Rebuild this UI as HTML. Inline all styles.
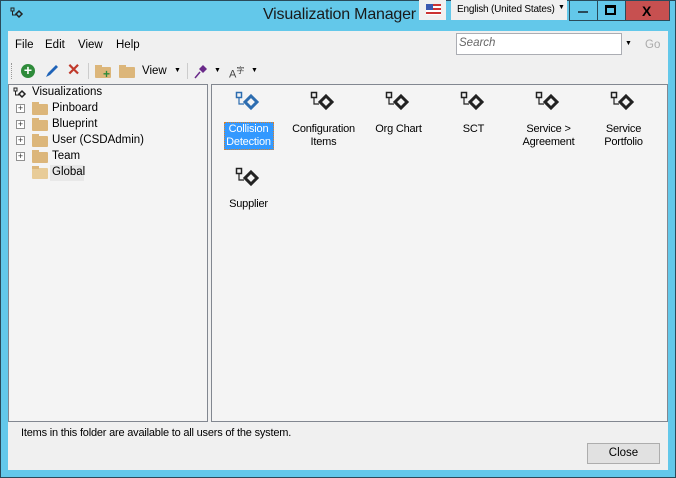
<!DOCTYPE html>
<html><head><style>
*{margin:0;padding:0;box-sizing:border-box}
body{width:676px;height:478px;overflow:hidden;font-family:"Liberation Sans",sans-serif;font-size:11.5px;color:#000;background:#63c8ea;position:relative}
.a{position:absolute}
.frame{left:0;top:0;width:676px;height:478px;border:1px solid #2a4a5a}
.client{left:8px;top:31px;width:660px;height:439px;background:#f0f0f0}
.pane{background:#f4f4f4;border:1px solid #828790}
.t{position:absolute;white-space:nowrap}
.lbl{position:absolute;width:75px;text-align:center;line-height:13px;font-size:11px;letter-spacing:-0.2px}
.pl{position:absolute;width:9px;height:9px;border:1px solid #919191;background:#fff;font-size:9px;line-height:7px;text-align:center;color:#333}
.fd{position:absolute;width:16px;height:11px;background:#dcb67a;border-radius:1px}
.fd:before{content:"";position:absolute;left:0;top:-2px;width:7px;height:3px;background:#dcb67a}
</style></head><body>
<div class="a frame"></div>
<svg class="a" style="left:10px;top:7px" width="14" height="12"><rect x="1" y="1" width="3" height="3" fill="none" stroke="#222"/><path d="M2.5 4V8H6" stroke="#222" fill="none"/><path d="M9 4L12 7 9 10 6 7Z" fill="none" stroke="#222" stroke-width="1.5"/></svg>
<div class="t" style="left:263px;top:6px;font-size:16px;color:#1a1a1a;letter-spacing:-0.2px">Visualization Manager</div>
<div class="a" style="left:419px;top:0;width:27px;height:20px;background:#f0f0f0"></div>
<div class="a" style="left:426px;top:4px;width:15px;height:11px;background:repeating-linear-gradient(#c33 0 2px,#fff 2px 4px)"><div style="width:7px;height:6px;background:#3a5ab0"></div></div>
<div class="a" style="left:451px;top:0;width:116px;height:20px;background:#f0f0f0"></div>
<div class="t" style="left:457px;top:4px;font-size:10px;letter-spacing:-0.2px">English (United States)</div>
<div class="t" style="left:558px;top:4px;font-size:7px">▼</div>
<div class="a" style="left:569px;top:0;width:101px;height:21px;border:1px solid #2a4a5a;background:#63c8ea"></div>
<div class="a" style="left:597px;top:0;width:1px;height:21px;background:#2a4a5a"></div>
<div class="a" style="left:625px;top:0;width:45px;height:21px;background:#c75050;border:1px solid #2a4a5a"></div>
<div class="a" style="left:578px;top:11px;width:10px;height:2px;background:#2a4a5a"></div>
<div class="a" style="left:605px;top:5px;width:11px;height:10px;border:2px solid #000;border-top-width:3px"></div>
<div class="t" style="left:642px;top:3px;font-size:14px;font-weight:bold">X</div>
<div class="a client"></div>
<div class="t" style="left:15px;top:39px">File</div>
<div class="t" style="left:45px;top:39px">Edit</div>
<div class="t" style="left:78px;top:39px">View</div>
<div class="t" style="left:116px;top:39px">Help</div>
<div class="a" style="left:456px;top:33px;width:166px;height:22px;background:#fff;border:1px solid #abadb3"></div>
<div class="t" style="left:459px;top:37px;font-style:italic;color:#666">Search</div>
<div class="t" style="left:625px;top:40px;font-size:7px">▼</div>
<div class="t" style="left:645px;top:39px;color:#aaa">Go</div>
<div class="a" style="left:11px;top:63px;width:1px;height:16px;border-left:1px dotted #999"></div>
<div class="a" style="left:21px;top:64px;width:14px;height:14px;border-radius:50%;background:#2e8b3a;color:#fff;font-weight:bold;font-size:14px;line-height:13px;text-align:center">+</div>
<svg class="a" style="left:44px;top:63px" width="16" height="16"><path d="M2 14L4 10 12 2 14 4 6 12Z" fill="#1e63b8"/></svg>
<div class="t" style="left:67px;top:60px;font-size:16px;color:#c0392b;font-weight:bold">✕</div>
<div class="a" style="left:88px;top:63px;width:1px;height:16px;background:#ccc"></div>
<div class="fd" style="left:95px;top:67px"></div><div class="t" style="left:103px;top:67px;color:#2e8b3a;font-weight:bold;font-size:12px">+</div>
<div class="fd" style="left:119px;top:67px"></div>
<div class="t" style="left:142px;top:65px">View</div>
<div class="t" style="left:174px;top:67px;font-size:7px">▼</div>
<div class="a" style="left:187px;top:63px;width:1px;height:16px;background:#ccc"></div>
<svg class="a" style="left:193px;top:63px" width="16" height="16"><path d="M2 15L7 9" stroke="#6a2a8a" stroke-width="1.5"/><path d="M6 6L10 2 14 6 10 10Z" fill="#6a2a8a"/></svg>
<div class="t" style="left:214px;top:67px;font-size:7px">▼</div>
<div class="t" style="left:229px;top:65px;font-size:11px;color:#444">A<sup style="font-size:8px">字</sup></div>
<div class="t" style="left:251px;top:67px;font-size:7px">▼</div>
<div class="a pane" style="left:8px;top:84px;width:200px;height:338px"></div>
<div class="a pane" style="left:211px;top:84px;width:457px;height:338px"></div>
<svg class="a" style="left:13px;top:87px" width="14" height="12"><rect x="1" y="1" width="3" height="3" fill="none" stroke="#222"/><path d="M2.5 4V8H6" stroke="#222" fill="none"/><path d="M9 4L12 7 9 10 6 7Z" fill="none" stroke="#222" stroke-width="1.5"/></svg>
<div class="t" style="left:32px;top:86px">Visualizations</div>
<div class="pl" style="left:16px;top:104px">+</div><div class="fd" style="left:32px;top:104px"></div><div class="t" style="left:52px;top:102px">Pinboard</div>
<div class="pl" style="left:16px;top:120px">+</div><div class="fd" style="left:32px;top:120px"></div><div class="t" style="left:52px;top:118px">Blueprint</div>
<div class="pl" style="left:16px;top:136px">+</div><div class="fd" style="left:32px;top:136px"></div><div class="t" style="left:52px;top:134px">User (CSDAdmin)</div>
<div class="pl" style="left:16px;top:152px">+</div><div class="fd" style="left:32px;top:152px"></div><div class="t" style="left:52px;top:150px">Team</div>
<div class="fd" style="left:32px;top:168px;background:#e8cc98"></div><div class="a" style="left:50px;top:165px;width:34px;height:16px;background:#e8e8e8"></div><div class="t" style="left:52px;top:166px">Global</div>

<svg class="a" style="left:0;top:0" width="676" height="478">
<defs><g id="ic"><rect x="0.5" y="0.5" width="5" height="5" fill="none" stroke="currentColor" stroke-width="1.5"/><path d="M3 6V12H8" fill="none" stroke="currentColor" stroke-width="1.2"/><path d="M15 4L21 10 15 16 9 10Z" fill="none" stroke="currentColor" stroke-width="3"/></g></defs>
<use href="#ic" x="236" y="92" style="color:#2d6db0"/>
<use href="#ic" x="311" y="92" style="color:#222"/>
<use href="#ic" x="386" y="92" style="color:#222"/>
<use href="#ic" x="461" y="92" style="color:#222"/>
<use href="#ic" x="536" y="92" style="color:#222"/>
<use href="#ic" x="611" y="92" style="color:#222"/>
<use href="#ic" x="236" y="168" style="color:#222"/>
</svg>
<div class="a" style="left:224px;top:122px;width:50px;height:28px;background:#3399ff;border:1px dotted #e08020"></div>
<div class="lbl" style="left:211px;top:123px;color:#fff">Collision<br>Detection</div>
<div class="lbl" style="left:286px;top:123px">Configuration<br>Items</div>
<div class="lbl" style="left:361px;top:123px">Org Chart</div>
<div class="lbl" style="left:436px;top:123px">SCT</div>
<div class="lbl" style="left:511px;top:123px">Service &gt;<br>Agreement</div>
<div class="lbl" style="left:586px;top:123px">Service<br>Portfolio</div>
<div class="lbl" style="left:211px;top:198px">Supplier</div>
<div class="t" style="left:21px;top:427px;font-size:11px;letter-spacing:-0.2px">Items in this folder are available to all users of the system.</div>
<div class="a" style="left:587px;top:443px;width:73px;height:21px;background:#e1e1e1;border:1px solid #adadad;text-align:center;line-height:19px">Close</div>
</body></html>
